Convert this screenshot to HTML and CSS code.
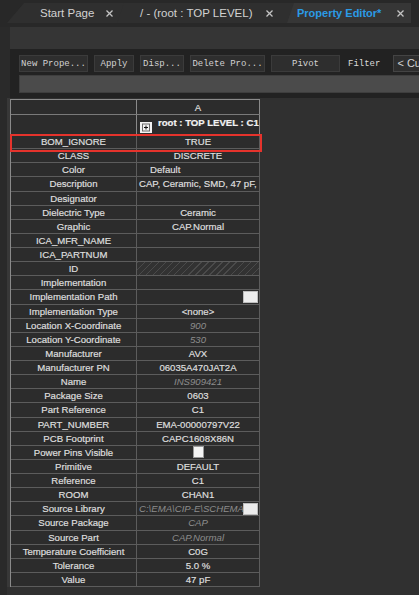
FILE: index.html
```html
<!DOCTYPE html>
<html lang="en">
<head>
    <meta charset="UTF-8">
    <meta name="viewport" content="width=device-width, initial-scale=1.0">
    <title>Property Editor</title>
    <link rel="stylesheet" href="styles.css">
</head>
<body>
    <div class="tabbar">
        <div class="tab tab-start">
            <span>Start Page</span>
            <svg class="close" width="7" height="7" viewBox="0 0 7 7"><path d="M0.5 0.5L6.5 6.5M6.5 0.5L0.5 6.5"/></svg>
        </div>
        <div class="tab tab-root">
            <span>/ - (root : TOP LEVEL)</span>
            <svg class="close" width="7" height="7" viewBox="0 0 7 7"><path d="M0.5 0.5L6.5 6.5M6.5 0.5L0.5 6.5"/></svg>
        </div>
        <div class="tab tab-active">
            <span>Property Editor*</span>
            <svg class="close" width="7" height="7" viewBox="0 0 7 7"><path d="M0.5 0.5L6.5 6.5M6.5 0.5L0.5 6.5"/></svg>
        </div>
    </div>

    <div class="main">
        <div class="side"></div>
        <div class="panel">
            <div class="panel-head"></div>
            <div class="toolbar">
                <div class="buttons">
                    <button class="btn btn-new">New Prope...</button>
                    <button class="btn btn-apply">Apply</button>
                    <button class="btn btn-disp">Disp...</button>
                    <button class="btn btn-delete">Delete Pro...</button>
                    <button class="btn btn-pivot">Pivot</button>
                    <span class="filter-label">Filter</span>
                    <div class="combo">&lt; Cur</div>
                </div>
                <div class="filter-bar"></div>
            </div>

            <div class="content">
                <div class="sheet">
                    <div class="row row-head">
                        <div class="cell"></div>
                        <div class="cell">A</div>
                    </div>
                    <div class="row row-root">
                        <div class="cell"></div>
                        <div class="cell cell-root">
                            <svg class="expander" width="12" height="11" viewBox="0 0 12 11">
                                <rect x="0" y="0" width="12" height="11" fill="#f2f2f2"/>
                                <rect x="2.5" y="2" width="7" height="7" fill="none" stroke="#6a6a6a"/>
                                <path d="M4 5.5H8M6 3.5V7.5" stroke="#111" stroke-width="1"/>
                            </svg>
                            <span class="root-name">root : TOP LEVEL : C1</span>
                        </div>
                    </div>

                    <div class="row"><div class="cell">BOM_IGNORE</div><div class="cell">TRUE</div></div>
                    <div class="row"><div class="cell">CLASS</div><div class="cell">DISCRETE</div></div>
                    <div class="row"><div class="cell">Color</div><div class="cell cell-combo">Default</div></div>
                    <div class="row"><div class="cell">Description</div><div class="cell cell-left">CAP, Ceramic, SMD, 47 pF,</div></div>
                    <div class="row"><div class="cell">Designator</div><div class="cell"></div></div>
                    <div class="row"><div class="cell">Dielectric Type</div><div class="cell">Ceramic</div></div>
                    <div class="row"><div class="cell">Graphic</div><div class="cell">CAP.Normal</div></div>
                    <div class="row"><div class="cell">ICA_MFR_NAME</div><div class="cell"></div></div>
                    <div class="row"><div class="cell">ICA_PARTNUM</div><div class="cell"></div></div>
                    <div class="row"><div class="cell">ID</div><div class="cell cell-locked"></div></div>
                    <div class="row"><div class="cell">Implementation</div><div class="cell"></div></div>
                    <div class="row"><div class="cell">Implementation Path</div><div class="cell cell-pick"><span class="pick"></span></div></div>
                    <div class="row"><div class="cell">Implementation Type</div><div class="cell">&lt;none&gt;</div></div>
                    <div class="row"><div class="cell">Location X-Coordinate</div><div class="cell muted">900</div></div>
                    <div class="row"><div class="cell">Location Y-Coordinate</div><div class="cell muted">530</div></div>
                    <div class="row"><div class="cell">Manufacturer</div><div class="cell">AVX</div></div>
                    <div class="row"><div class="cell">Manufacturer PN</div><div class="cell">06035A470JAT2A</div></div>
                    <div class="row"><div class="cell">Name</div><div class="cell muted">INS909421</div></div>
                    <div class="row"><div class="cell">Package Size</div><div class="cell">0603</div></div>
                    <div class="row"><div class="cell">Part Reference</div><div class="cell">C1</div></div>
                    <div class="row"><div class="cell">PART_NUMBER</div><div class="cell">EMA-00000797V22</div></div>
                    <div class="row"><div class="cell">PCB Footprint</div><div class="cell">CAPC1608X86N</div></div>
                    <div class="row"><div class="cell">Power Pins Visible</div><div class="cell"><span class="check"></span></div></div>
                    <div class="row"><div class="cell">Primitive</div><div class="cell">DEFAULT</div></div>
                    <div class="row"><div class="cell">Reference</div><div class="cell">C1</div></div>
                    <div class="row"><div class="cell">ROOM</div><div class="cell">CHAN1</div></div>
                    <div class="row"><div class="cell">Source Library</div><div class="cell cell-pick"><span class="path muted">C:\EMA\CIP-E\SCHEMA</span><span class="pick"></span></div></div>
                    <div class="row"><div class="cell">Source Package</div><div class="cell muted">CAP</div></div>
                    <div class="row"><div class="cell">Source Part</div><div class="cell muted">CAP.Normal</div></div>
                    <div class="row"><div class="cell">Temperature Coefficient</div><div class="cell">C0G</div></div>
                    <div class="row"><div class="cell">Tolerance</div><div class="cell">5.0 %</div></div>
                    <div class="row"><div class="cell">Value</div><div class="cell">47 pF</div></div>

                    <!-- highlight drawn over the BOM_IGNORE row -->
                    <div class="mark"></div>
                </div>
            </div>
        </div>
    </div>
</body>
</html>
```

FILE: styles.css
```css
body{
    margin:0;
    width:419px;
    height:595px;
    overflow:hidden;
    background:#303030;
    font-family: "Liberation Sans", Arial, sans-serif;
}

/* document tabs */
.tabbar{
    height:27px;
    background:#282828;
    display:flex;
    align-items:flex-start;
}
.tab{
    flex:none;
    box-sizing:border-box;
    height:20px;
    margin-top:3px;
    margin-left:-7px;
    display:flex;
    align-items:center;
    background:#2f2f2f;
    color:#d2d2d2;
    font-size:11.5px;
    white-space:nowrap;
    clip-path: polygon(7px 0, 100% 0, 100% 100%, 0 100%);
}
.tab-start{
    margin-left:7px;
    width:117px;
    padding-left:33px;
    padding-right:11px;
    clip-path: polygon(17px 0, 100% 0, 100% 100%, 0 100%);
}
.tab-root{
    width:177px;
    padding-left:23px;
    padding-right:21px;
}
.tab-active{
    width:124px;
    padding-left:10px;
    padding-right:7px;
    background:#363636;
    color:#2b9be6;
    font-weight:bold;
    font-size:11px;
}
.close{
    margin-left:auto;
    stroke:#c4c4c4;
    stroke-width:1.3;
}

/* panel */
.main{
    display:flex;
    height:568px;
}
.side{
    width:7px;
    flex:none;
    background:#2a2a2a;
}
.panel{
    flex:1;
    min-width:0;
}
.panel-head{
    height:22px;
    background:#353535;
    border-left:3px solid #2a2a2a;
}
.toolbar{
    background:#222;
    border-left:3px solid #2a2a2a;
    padding:6px 0 5px 9px;
}
.buttons{
    display:flex;
    align-items:center;
    height:17px;
    white-space:nowrap;
}
.btn{
    flex:none;
    box-sizing:border-box;
    height:17px;
    margin:0 6px 0 0;
    padding:0;
    background:#2e2e2e;
    border:1px solid #3b3b3b;
    color:#d2d2d2;
    font-family: "Liberation Mono", "Courier New", monospace;
    font-size:9px;
}
.btn-new{ width:69px; }
.btn-apply{ width:40px; }
.btn-disp{ width:44px; }
.btn-delete{ width:75px; }
.btn-pivot{ width:69px; }
.filter-label{
    margin-left:2px;
    color:#dadada;
    font-family: "Liberation Mono", "Courier New", monospace;
    font-size:9px;
}
.combo{
    flex:none;
    box-sizing:border-box;
    width:60px;
    height:17px;
    margin-left:13px;
    padding-left:3px;
    line-height:15px;
    background:#2e2e2e;
    border:1px solid #444;
    color:#d2d2d2;
    font-size:11px;
}
.filter-bar{
    height:16px;
    margin-top:3px;
    background:#4b4b4b;
    border:1px solid #3e3e3e;
    border-right:none;
}

/* property grid */
.content{
    border-left:3px solid #383838;
    padding-top:1px;
}
.sheet{
    position:relative;
    width:249px;
    border-left:1px solid #8a8a8a;
    border-top:1px solid #8a8a8a;
    font-size:9.6px;
    color:#dedede;
    -webkit-text-stroke:0.2px;
}
.row{
    display:grid;
    grid-template-columns:126px 123px;
    box-sizing:border-box;
    height:14.13px;
    border-bottom:1px solid #5c5c5c;
    background:#2c2c2c;
}
.cell{
    display:flex;
    align-items:center;
    justify-content:center;
    overflow:hidden;
    white-space:nowrap;
    border-right:1px solid #5c5c5c;
}
.row-head{
    height:15px;
    border-bottom-color:#7a7a7a;
}
.row-head .cell{
    border-right-color:#8a8a8a;
}
.row-root{
    height:20px;
}
.row-root .cell{
    border-right-color:#8a8a8a;
}
.cell-root{
    justify-content:flex-start;
    align-items:flex-start;
    padding-left:3px;
}
.expander{
    flex:none;
    margin-top:7px;
}
.root-name{
    margin-left:6px;
    margin-top:2px;
    line-height:11px;
    font-weight:bold;
    color:#f2f2f2;
}
.cell-combo{
    justify-content:flex-start;
    padding-left:13px;
}
.cell-left{
    justify-content:flex-start;
    padding-left:2px;
}
.cell-locked{
    background: repeating-linear-gradient(135deg, #4a4a4a 0 1px, #323232 1px 5px);
}
.cell-pick{
    justify-content:flex-end;
    padding-left:2px;
}
.pick{
    flex:none;
    box-sizing:border-box;
    width:15px;
    height:12px;
    margin-right:1px;
    background:#ececec;
    border:1px solid #bdbdbd;
}
.path{
    flex:1;
    overflow:hidden;
    min-width:0;
}
.muted{
    color:#8c8c8c;
    font-style:italic;
    -webkit-text-stroke:0;
}
.check{
    box-sizing:border-box;
    width:11px;
    height:12px;
    background:#f4f4f4;
    border:1px solid #9a9a9a;
}
.mark{
    position:absolute;
    left:-1px;
    top:34px;
    width:252px;
    height:18px;
    box-sizing:border-box;
    border:2px solid #e5332c;
}
```
